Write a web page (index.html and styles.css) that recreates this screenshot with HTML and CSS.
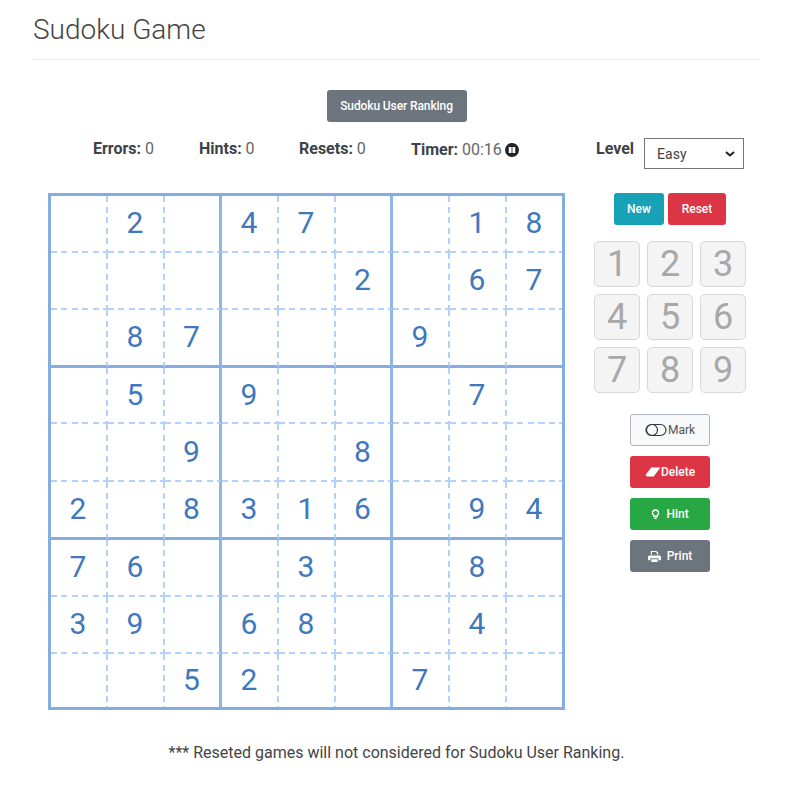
FILE: index.html
```html
<!DOCTYPE html>
<html lang="en">

<head>
    <meta charset="UTF-8">
    <title>Sudoku Game</title>
    <link rel="stylesheet" href="styles.css">
</head>

<body>
    <div class="page">
        <h1 class="title">Sudoku Game</h1>
        <div class="ranking-row">
            <button class="btn btn-gray ranking-btn">Sudoku User Ranking</button>
        </div>
        <div class="stats-row">
            <div class="stat stat-errors"><b>Errors:</b> 0</div>
            <div class="stat stat-hints"><b>Hints:</b> 0</div>
            <div class="stat stat-resets"><b>Resets:</b> 0</div>
            <div class="stat stat-timer"><b>Timer:</b> 00:16
                <svg class="pause-icon" viewBox="0 0 16 16" width="14" height="14">
                    <path fill="#212529" fill-rule="evenodd" d="M8 0a8 8 0 1 0 0 16A8 8 0 0 0 8 0zM4.300 4.500h3.200v7H4.300zm4.200 0h3.200v7H8.500z"/>
                </svg>
            </div>
            <div class="level">
                <b>Level</b>
                <select class="level-select">
                    <option>Easy</option>
                </select>
            </div>
        </div>
        <div class="game">
            <div class="board" id="board"></div>
            <div class="side">
                <div class="new-reset">
                    <button class="btn btn-teal">New</button>
                    <button class="btn btn-red">Reset</button>
                </div>
                <div class="numpad">
                    <div class="num">1</div>
                    <div class="num">2</div>
                    <div class="num">3</div>
                    <div class="num">4</div>
                    <div class="num">5</div>
                    <div class="num">6</div>
                    <div class="num">7</div>
                    <div class="num">8</div>
                    <div class="num">9</div>
                </div>
                <div class="actions">
                    <button class="btn btn-light action">
                        <svg viewBox="0 0 22 14" width="22" height="14">
                            <rect x="1" y="1.500" width="20" height="11" rx="5.500" fill="none" stroke="#343a40" stroke-width="1.200"/>
                            <circle cx="7" cy="7" r="5.500" fill="none" stroke="#343a40" stroke-width="1.200"/>
                        </svg><span class="mark-label">Mark</span>
                    </button>
                    <button class="btn btn-red action">
                        <svg viewBox="0 0 15 10" width="15" height="10">
                            <path fill="#fff" d="M6.200.5h8c.6 0 .8.500.5 1L8.700 9.500H2L.5 8z"/>
                        </svg><span class="gap-small">Delete</span>
                    </button>
                    <button class="btn btn-green action">
                        <svg viewBox="0 0 10 12" width="9" height="11">
                            <path fill="none" stroke="#fff" stroke-width="1.500" d="M5 1a3.300 3.300 0 0 0-2 6v1h4V7a3.300 3.300 0 0 0-2-6z"/>
                            <path fill="#fff" d="M3.500 9.300h3v1.700h-3z"/>
                        </svg><span class="gap-left">Hint</span>
                    </button>
                    <button class="btn btn-gray action">
                        <svg viewBox="0 0 14 12" width="13" height="11">
                            <path fill="#fff" fill-rule="evenodd" d="M3 0h6l2 2v2H9.800V2.800L8.500 1.200H4.200V4H3zM1.500 4.800h11c.8 0 1.500.7 1.500 1.500V10h-2.500V8h-9v2H0V6.300c0-.8.7-1.500 1.500-1.500zM3.500 9h7v3h-7z"/>
                        </svg><span class="gap-left">Print</span>
                    </button>
                </div>
            </div>
        </div>
        <p class="note">*** Reseted games will not considered for Sudoku User Ranking.</p>
    </div>

    <script src="board.js"></script>
</body>

</html>
```

FILE: styles.css
```css
* {
    box-sizing: border-box;
}

body {
    margin: 0;
    background-color: #fff;
    color: #212529;
    font-family: Roboto, "Liberation Sans", sans-serif;
    font-size: 14px;
}

.page {
    width: 785px;
    height: 795px;
    padding: 0 25px 0 33px;
    overflow: hidden;
}

.title {
    margin: 0;
    height: 60px;
    padding-top: 13px;
    border-bottom: 1px solid #e9ecef;
    color: #444;
    font-size: 28px;
    line-height: 34px;
    font-weight: 300;
}

.ranking-row {
    display: flex;
    justify-content: center;
    margin-top: 30px;
}

.btn {
    height: 32px;
    border: 1px solid transparent;
    border-radius: 3px;
    color: #fff;
    font-family: inherit;
    font-size: 12px;
    font-weight: 500;
    padding: 0;
}

.ranking-btn {
    width: 140px;
    letter-spacing: -0.1px;
}

.btn-gray {
    background-color: #6c757d;
}

.btn-teal {
    background-color: #17a2b8;
}

.btn-red {
    background-color: #dc3545;
}

.btn-green {
    background-color: #28a745;
}

.btn-light {
    background-color: #f8f9fa;
    border-color: #adb5bd;
    color: #555;
}

.stats-row {
    display: flex;
    height: 71px;
    padding-top: 17px;
    font-size: 16px;
    line-height: 20px;
    color: #666;
}

.stat b,
.level b {
    font-weight: 700;
    color: #3c4248;
}

.stat-errors {
    margin-left: 60px;
    width: 106px;
}

.stat-hints {
    width: 100px;
}

.stat-resets {
    width: 112px;
}

.stat-timer {
    width: 185px;
    padding-top: 1px;
}

.pause-icon {
    margin-left: -1px;
    vertical-align: -2px;
}

.level {
    display: flex;
    align-items: flex-start;
    gap: 10px;
}

.level-select {
    width: 100px;
    height: 31px;
    margin-top: -1px;
    padding-left: 12px;
    border: 1px solid #767676;
    border-radius: 0;
    background: #fff url("data:image/svg+xml,%3Csvg xmlns='http://www.w3.org/2000/svg' viewBox='0 0 10 6'%3E%3Cpath fill='none' stroke='%23222' stroke-width='2' d='M1 1l4 3.500L9 1'/%3E%3C/svg%3E") no-repeat right 8px center / 10px 6px;
    color: #444;
    font-family: inherit;
    font-size: 14px;
    appearance: none;
}

.game {
    display: flex;
    padding-left: 15px;
}

.board {
    --dash-v: repeating-linear-gradient(to bottom, #b0d2fb 0 6px, transparent 6px 10.500px);
    --dash-h: repeating-linear-gradient(to right, #b0d2fb 0 6px, transparent 6px 10.500px);
    display: grid;
    grid-template-columns: repeat(8, 57px) 55px;
    grid-template-rows: 57px 57px 58px 56px 58px 58px 57px 57px 53px;
    width: 517px;
    height: 517px;
    border: 3px solid #85aee0;
}

/* dashes are painted into the transparent border area, thick lines replace them */
.cell {
    display: flex;
    align-items: center;
    justify-content: center;
    padding: 0 1px 2px 0;
    border-right: 2px solid transparent;
    border-bottom: 2px solid transparent;
    background-image: var(--dash-v), var(--dash-h);
    background-origin: border-box;
    background-clip: border-box;
    background-position: right top, left bottom;
    background-size: 2px 100%, 100% 2px;
    background-repeat: no-repeat;
    color: #3f78bd;
    font-size: 30px;
}

.cell-thick-right {
    --dash-v: none;
    border-right: 3px solid #8fb5e6;
}

.cell-thick-bottom {
    --dash-h: none;
    border-bottom: 3px solid #85aee0;
}

.cell-last-col {
    --dash-v: none;
    border-right: 0;
}

.cell-last-row {
    --dash-h: none;
    border-bottom: 0;
}

.side {
    display: flex;
    flex-direction: column;
    align-items: center;
    width: 152px;
    margin-left: 29px;
}

.new-reset {
    display: flex;
    gap: 4px;
}

.new-reset .btn-teal {
    width: 50px;
}

.new-reset .btn-red {
    width: 58px;
}

.numpad {
    display: grid;
    grid-template-columns: repeat(3, 46px);
    grid-auto-rows: 46px;
    gap: 7px;
    margin-top: 16px;
}

.num {
    display: flex;
    align-items: center;
    justify-content: center;
    border: 1px solid #d8d8d8;
    border-radius: 5px;
    background-color: #f4f4f4;
    color: #a8a8a8;
    font-size: 36px;
}

.actions {
    display: flex;
    flex-direction: column;
    gap: 10px;
    margin-top: 21px;
}

.action {
    display: flex;
    align-items: center;
    justify-content: center;
    width: 80px;
}

.mark-label {
    margin-left: 1px;
    font-weight: 400;
}

.gap-small {
    margin-left: 1px;
}

.gap-left {
    margin-left: 6px;
}

.note {
    margin: 33px 0 0;
    text-align: center;
    font-size: 16px;
    line-height: 20px;
    color: #444;
}
```

FILE: board.js
```js
const puzzle = [
    ' 2 47  18',
    '     2 67',
    ' 87   9  ',
    ' 5 9   7 ',
    '  9  8   ',
    '2 8316 94',
    '76  3  8 ',
    '39 68  4 ',
    '  52  7  '
];

const board = document.getElementById('board');

puzzle.forEach((row, r) => {
    row.split('').forEach((ch, c) => {
        const cell = document.createElement('div');
        cell.className = 'cell';
        if (c === 8) cell.classList.add('cell-last-col');
        else if (c % 3 === 2) cell.classList.add('cell-thick-right');
        if (r === 8) cell.classList.add('cell-last-row');
        else if (r % 3 === 2) cell.classList.add('cell-thick-bottom');
        cell.textContent = ch.trim();
        board.appendChild(cell);
    });
});
```
